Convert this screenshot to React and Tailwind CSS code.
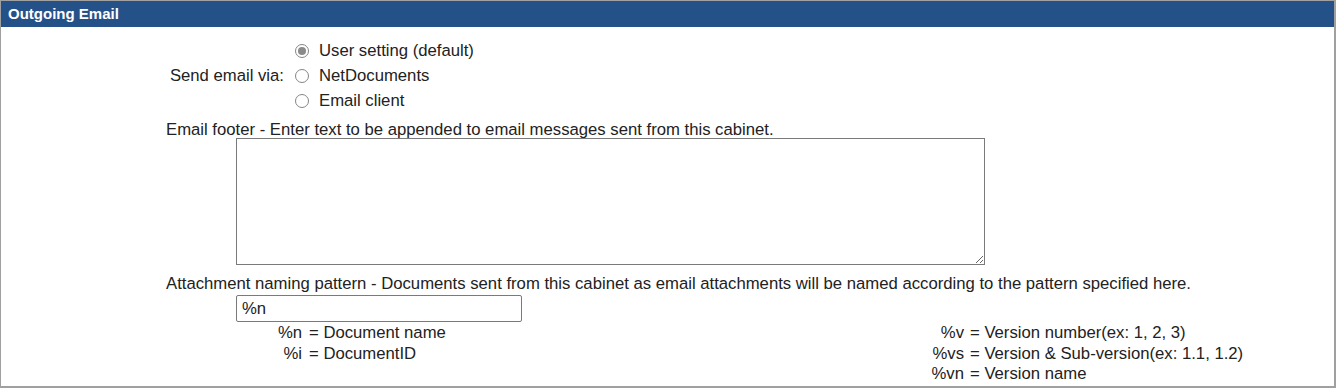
const options = [
  { label: "User setting (default)", checked: true },
  { label: "NetDocuments", checked: false },
  { label: "Email client", checked: false },
]

function Radio({ checked }) {
  return (
    <span className="flex h-[14px] w-[14px] shrink-0 items-center justify-center rounded-full border border-[#858585] bg-white">
      {checked && <span className="h-[8px] w-[8px] rounded-full bg-[#8a8a8a]" />}
    </span>
  )
}

export default function App() {
  return (
    <div
      className="h-[388px] w-[1336px] border border-r-2 border-b-2 border-[#a0a0a0] bg-white text-[16.7px] text-[#222]"
      style={{ fontFamily: '"Liberation Sans", Arial, sans-serif' }}
    >
      {/* Header */}
      <div className="flex h-[26px] items-center bg-[#255189] pl-[7px] text-[15px] font-bold text-white">
        Outgoing Email
      </div>

      {/* Send email via */}
      <div className="flex pt-[11px]">
        <div className="flex w-[283px] items-center justify-end">Send email via:</div>
        <div className="ml-[11px] flex flex-col">
          {options.map((o) => (
            <div key={o.label} className="flex h-[25px] items-center">
              <Radio checked={o.checked} />
              <span className="ml-[10px]">{o.label}</span>
            </div>
          ))}
        </div>
      </div>

      {/* Email footer */}
      <div className="ml-[165px] mt-[9px] h-[16px] leading-[16px]">
        Email footer - Enter text to be appended to email messages sent from this cabinet.
      </div>
      <textarea className="ml-[235px] block h-[127px] w-[749px] border border-[#7a7a7a] bg-white" />

      {/* Attachment naming pattern */}
      <div className="ml-[165px] mt-[11px] h-[16px] leading-[16px]">
        Attachment naming pattern - Documents sent from this cabinet as email attachments will be named according to
        the pattern specified here.
      </div>
      <input
        defaultValue="%n"
        className="ml-[235px] mt-[3px] block h-[27px] w-[286px] rounded-[2px] border border-[#7a7a7a] px-[5px] text-[16.7px] text-[#222] outline-none"
      />

      {/* Legend */}
      <div className="mt-[1px] grid grid-cols-[301px_596px_66px_auto] leading-[20.5px]">
        <div className="text-right">%n</div>
        <div className="pl-[7px]">= Document name</div>
        <div className="text-right">%v</div>
        <div className="pl-[6px]">= Version number(ex: 1, 2, 3)</div>

        <div className="text-right">%i</div>
        <div className="pl-[7px]">= DocumentID</div>
        <div className="text-right">%vs</div>
        <div className="pl-[6px]">= Version &amp; Sub-version(ex: 1.1, 1.2)</div>

        <div />
        <div />
        <div className="text-right">%vn</div>
        <div className="pl-[6px]">= Version name</div>
      </div>
    </div>
  )
}
